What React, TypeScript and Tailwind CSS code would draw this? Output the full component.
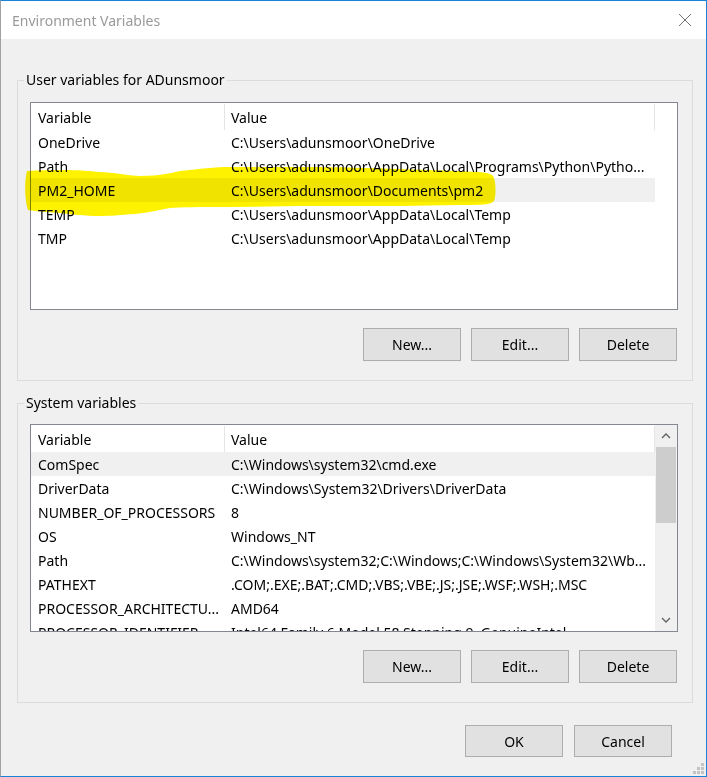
import type { ReactNode } from "react"

type Row = { name: string; value: string; selected?: boolean }

const userVars: Row[] = [
  { name: "OneDrive", value: "C:\\Users\\adunsmoor\\OneDrive" },
  { name: "Path", value: "C:\\Users\\adunsmoor\\AppData\\Local\\Programs\\Python\\Pytho..." },
  { name: "PM2_HOME", value: "C:\\Users\\adunsmoor\\Documents\\pm2", selected: true },
  { name: "TEMP", value: "C:\\Users\\adunsmoor\\AppData\\Local\\Temp" },
  { name: "TMP", value: "C:\\Users\\adunsmoor\\AppData\\Local\\Temp" },
]

const systemVars: Row[] = [
  { name: "ComSpec", value: "C:\\Windows\\system32\\cmd.exe", selected: true },
  { name: "DriverData", value: "C:\\Windows\\System32\\Drivers\\DriverData" },
  { name: "NUMBER_OF_PROCESSORS", value: "8" },
  { name: "OS", value: "Windows_NT" },
  { name: "Path", value: "C:\\Windows\\system32;C:\\Windows;C:\\Windows\\System32\\Wb..." },
  { name: "PATHEXT", value: ".COM;.EXE;.BAT;.CMD;.VBS;.VBE;.JS;.JSE;.WSF;.WSH;.MSC" },
  { name: "PROCESSOR_ARCHITECTU...", value: "AMD64" },
  { name: "PROCESSOR_IDENTIFIER", value: "Intel64 Family 6 Model 58 Stepping 9, GenuineIntel" },
]

function WinButton({ children, className = "h-[33px]" }: { children: ReactNode; className?: string }) {
  return (
    <button className={`flex w-[98px] items-center justify-center border border-[#adadad] bg-[#e1e1e1] text-[14px] text-black ${className}`}>
      {children}
    </button>
  )
}

function Header() {
  return (
    <div className="flex h-[27px] w-[624px] shrink-0 items-center bg-white pt-[1px]">
      <div className="flex h-full w-[194px] items-center border-r border-[#e5e5e5] pl-[7px]">Variable</div>
      <div className="flex h-full w-[430px] items-center border-r border-[#e5e5e5] pl-[6px]">Value</div>
    </div>
  )
}

function Rows({ rows }: { rows: Row[] }) {
  return (
    <>
      {rows.map((r) => (
        <div
          key={r.name}
          className={`flex h-[24px] w-[624px] shrink-0 items-center ${r.selected ? "bg-[#f0f0f0]" : "bg-white"}`}
        >
          <div className="w-[194px] shrink-0 overflow-hidden whitespace-nowrap pl-[7px]">{r.name}</div>
          <div className="flex-1 overflow-hidden whitespace-nowrap pl-[6px]">{r.value}</div>
        </div>
      ))}
    </>
  )
}

function Chevron({ up }: { up?: boolean }) {
  return (
    <svg width="10" height="6" viewBox="0 0 10 6">
      <polyline
        points={up ? "1,5 5,1 9,5" : "1,1 5,5 9,1"}
        fill="none"
        stroke="#606060"
        strokeWidth="1.3"
      />
    </svg>
  )
}

function GroupBox({ label, children }: { label: string; children: ReactNode }) {
  return (
    <fieldset className="w-[676px] border border-[#dcdcdc] pb-[19px]">
      <legend className="ml-[6px] px-[2px] leading-[20px]">{label}</legend>
      {children}
    </fieldset>
  )
}

function ButtonRow() {
  return (
    <div className="mt-[18px] flex justify-end gap-[10px] pr-[15px]">
      <WinButton>New...</WinButton>
      <WinButton>Edit...</WinButton>
      <WinButton>Delete</WinButton>
    </div>
  )
}

export default function App() {
  return (
    <div className="h-[777px] w-[707px] bg-white font-['Segoe_UI','Noto_Sans',sans-serif] text-[14px] text-black">
      <div className="relative flex h-[777px] w-[707px] flex-col border border-[#1883d7] border-l-[#a0a0a0] bg-[#f0f0f0]">
        <div className="flex h-[38px] shrink-0 items-center justify-between bg-white pl-[11px] pr-[14px]">
          <span className="text-[14px] text-[#9a9a9a]">Environment Variables</span>
          <svg width="14" height="14" viewBox="0 0 14 14">
            <path d="M1 1 L13 13 M13 1 L1 13" stroke="#707070" strokeWidth="1" />
          </svg>
        </div>

        <div className="flex flex-col pl-[16px]">
          <div className="mt-[31px]">
            <GroupBox label="User variables for ADunsmoor">
              <div className="relative ml-[12px] mt-[12px] w-[648px]">
                <div className="flex h-[208px] w-[648px] flex-col overflow-hidden border border-[#828790] bg-white">
                  <Header />
                  <Rows rows={userVars} />
                </div>
                <svg
                  className="pointer-events-none absolute left-0 top-0 overflow-visible mix-blend-multiply"
                  width="470"
                  height="120"
                  viewBox="0 0 470 120"
                >
                  <path
                    d="M-3 69 C10 68 20 68 30 68 C50 68 60 69 70 70 C90 71 100 74 110 74 C130 74 140 71 150 69 C170 67 185 65 200 65 L270 65 C310 65 340 66 370 67 C400 68 430 69 450 70 C458 71 463 72 464 76 C466 82 466 94 464 99 C462 103 450 103 430 103 L370 104 L270 104 L200 105 C170 105 150 105 140 106 C125 109 115 111 105 112 C90 113 80 114 70 114 C55 114 40 112 30 111 C15 110 5 109 -2 108 C-5 100 -6 80 -3 69 Z"
                    fill="#fff200"
                  />
                </svg>
              </div>
              <ButtonRow />
            </GroupBox>
          </div>

          <div className="mt-[12px]">
            <GroupBox label="System variables">
              <div className="ml-[12px] mt-[11px] flex h-[208px] w-[648px] overflow-hidden border border-[#828790] bg-white">
                <div className="flex w-[624px] flex-col overflow-hidden">
                  <Header />
                  <Rows rows={systemVars} />
                </div>
                <div className="flex w-[22px] flex-col bg-[#f0f0f0]">
                  <div className="flex h-[22px] items-center justify-center">
                    <Chevron up />
                  </div>
                  <div className="mx-[1px] h-[76px] bg-[#cdcdcd]" />
                  <div className="flex-1" />
                  <div className="flex h-[22px] items-center justify-center">
                    <Chevron />
                  </div>
                </div>
              </div>
              <ButtonRow />
            </GroupBox>
          </div>

          <div className="mt-[22px] flex w-[676px] justify-end gap-[11px] pr-[21px]">
            <WinButton className="h-[32px]">OK</WinButton>
            <WinButton className="h-[32px]">Cancel</WinButton>
          </div>
        </div>

        <svg className="absolute bottom-[2px] right-[2px]" width="12" height="12" viewBox="0 0 12 12">
          <rect x="9" y="1" width="3" height="3" fill="#c4c4c4" />
          <rect x="5" y="5" width="3" height="3" fill="#c4c4c4" />
          <rect x="9" y="5" width="3" height="3" fill="#c4c4c4" />
          <rect x="1" y="9" width="3" height="3" fill="#c4c4c4" />
          <rect x="5" y="9" width="3" height="3" fill="#c4c4c4" />
          <rect x="9" y="9" width="3" height="3" fill="#c4c4c4" />
        </svg>
      </div>
    </div>
  )
}
